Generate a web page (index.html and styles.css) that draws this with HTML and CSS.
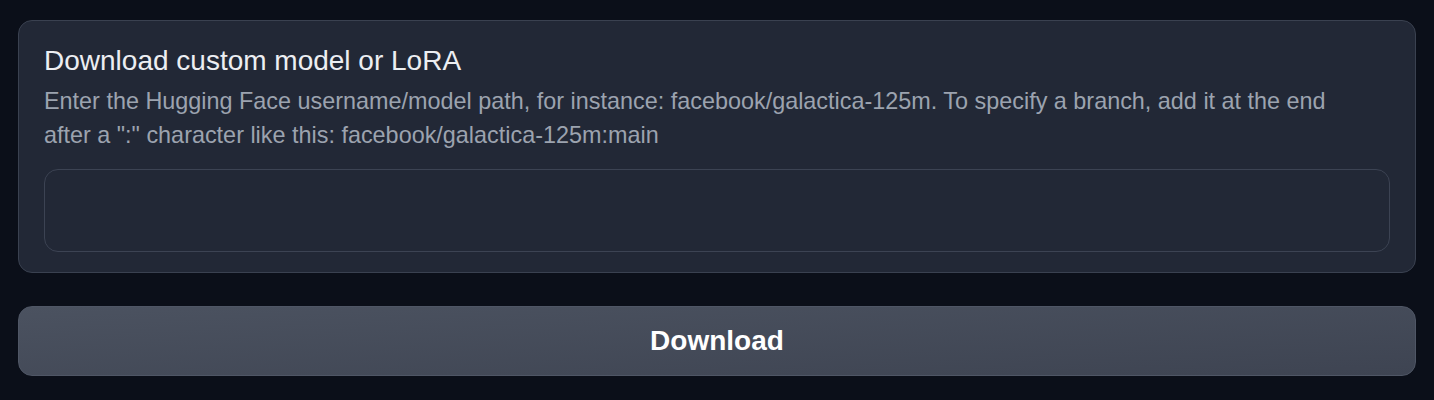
FILE: index.html
```html
<!DOCTYPE html>
<html lang="en">
<head>
    <meta charset="UTF-8">
    <meta name="viewport" content="width=device-width, initial-scale=1.0">
    <title>Download model</title>
    <link rel="stylesheet" href="styles.css">
</head>
<body>
    <div class="container">
        <div class="block">
            <label class="block-label" for="model-path">Download custom model or LoRA</label>
            <div class="block-info">Enter the Hugging Face username/model path, for instance: facebook/galactica-125m. To specify a branch, add it at the end after a ":" character like this: facebook/galactica-125m:main</div>
            <textarea id="model-path" class="text-input" rows="1"></textarea>
        </div>
        <button class="download-btn">Download</button>
    </div>
</body>
</html>
```

FILE: styles.css
```css
body {
    font-family: 'Liberation Sans', Arial, Helvetica, sans-serif;
    margin: 0;
    padding: 20px 18px;
    background-color: #0b0f19;
    color: #e5e7eb;
}

.container {
    display: flex;
    flex-direction: column;
    gap: 33px;
}

.block {
    display: flex;
    flex-direction: column;
    background-color: #222836;
    border: 1px solid #3a4150;
    border-radius: 14px;
    padding: 22px 25px 20px;
}

.block-label {
    font-size: 28px;
    line-height: 36px;
    color: #eceef2;
}

.block-info {
    max-width: 1310px;
    font-size: 23.4px;
    line-height: 34px;
    color: #9ca3af;
    margin-top: 5px;
    margin-bottom: 17px;
}

.text-input {
    height: 83px;
    box-sizing: border-box;
    background-color: #222836;
    border: 1.5px solid #3c4353;
    border-radius: 14px;
    resize: none;
    outline: none;
    font-family: inherit;
    font-size: 20px;
    color: #e5e7eb;
    padding: 12px 16px;
}

.download-btn {
    height: 70px;
    background: linear-gradient(to bottom right, #4b5260, #3e4452);
    border: 1px solid #4f5665;
    border-radius: 14px;
    color: #ffffff;
    font-family: inherit;
    font-size: 28px;
    font-weight: bold;
    cursor: pointer;
}
```
